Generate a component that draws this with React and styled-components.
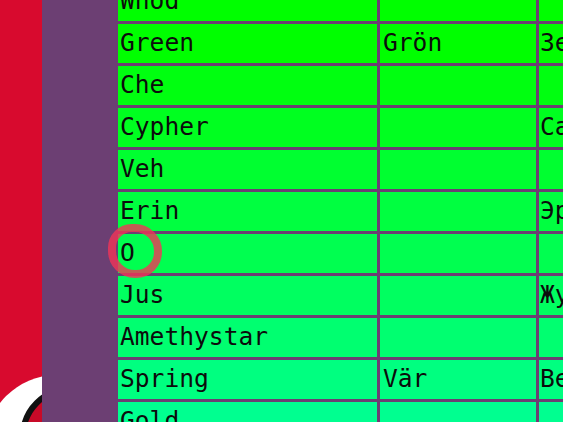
import styled, { createGlobalStyle } from "styled-components";

const Global = createGlobalStyle`
    html, body { margin: 0; padding: 0; background: #6c3f73; }
    body { overflow: hidden; }
`;

const Page = styled.div`
    width: 563px;
    height: 422px;
    display: flex;
    overflow: hidden;
`;

const Side = styled.div`
    position: relative;
    flex: 0 0 42px;
    height: 100%;
    background: #d80a2e;
    overflow: hidden;
`;

const Badge = styled.svg`
    position: absolute;
    left: 0;
    bottom: 0;
`;

const Main = styled.div`
    flex: 1;
    background: #6c3f73;
    padding-left: 73px;
    overflow: hidden;
`;

const Table = styled.table`
    margin-top: -21px;
    border-spacing: 3px;
    background: #6c3f73;
    table-layout: fixed;
    width: 700px;
    font-family: "DejaVu Sans Mono", "Liberation Mono", monospace;
    font-size: 24.6px;
    color: #0c0c0c;
`;

const Row = styled.tr`
    background: ${p => p.$bg};
`;

const Cell = styled.td`
    position: relative;
    height: 39px;
    padding: 0 0 0 ${p => p.$pad || 2}px;
    white-space: nowrap;
    overflow: visible;
    vertical-align: middle;
    line-height: 1;
`;

const Mark = styled.span`
    position: absolute;
    left: -10px;
    top: -10px;
    width: 54px;
    height: 54px;
    box-sizing: border-box;
    border: 8px solid rgba(242, 52, 88, 0.8);
    border-radius: 44% 50% 48% 50%;
    filter: blur(0.6px);
    pointer-events: none;
`;

const rows = [
    ["Whod", "", ""],
    ["Green", "Grön", "Зелёный"],
    ["Che", "", ""],
    ["Cypher", "", "Сайфер"],
    ["Veh", "", ""],
    ["Erin", "", "Эрин"],
    ["O", "", ""],
    ["Jus", "", "Жус"],
    ["Amethystar", "", ""],
    ["Spring", "Vär", "Весна"],
    ["Gold", "", ""],
];

const shade = i => {
    const g = Math.max(0, Math.min(255, (i - 1) * 16)).toString(16).padStart(2, "0");
    return "#00ff" + g;
};

const App = () => {
    return (
        <Page>
            <Global />
            <Side>
                <Badge width="42" height="60" viewBox="0 362 42 60">
                    <circle cx="57" cy="447" r="72" fill="#ffffff" />
                    <circle cx="70" cy="436" r="47" fill="#c80a28" stroke="#111" strokeWidth="6" />
                </Badge>
            </Side>
            <Main>
                <Table>
                    <colgroup>
                        <col style={{ width: 259 }} />
                        <col style={{ width: 156 }} />
                        <col />
                    </colgroup>
                    <tbody>
                        {rows.map((r, i) => (
                            <Row key={i} $bg={shade(i)}>
                                <Cell>
                                    {r[0]}
                                    {r[0] === "O" && <Mark />}
                                </Cell>
                                <Cell $pad={3}>{r[1]}</Cell>
                                <Cell $pad={1}>{r[2]}</Cell>
                            </Row>
                        ))}
                    </tbody>
                </Table>
            </Main>
        </Page>
    );
};

export default App;
